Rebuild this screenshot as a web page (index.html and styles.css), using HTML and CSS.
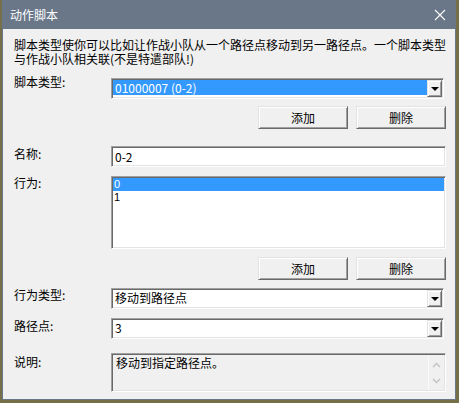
FILE: index.html
```html
<!DOCTYPE html>
<html lang="zh-CN">
<head>
    <meta charset="UTF-8">
    <meta name="viewport" content="width=device-width, initial-scale=1.0">
    <link rel="stylesheet" href="styles.css">
</head>
<body>
    <div class="window">
        <div class="titlebar">
            <span class="title">动作脚本</span>
            <svg class="close" width="12" height="12" viewBox="0 0 12 12">
                <path d="M1 1L11 11M11 1L1 11" stroke="#fff" stroke-width="1.1" fill="none"/>
            </svg>
        </div>

        <div class="content">
            <p class="desc">脚本类型使你可以比如让作战小队从一个路径点移动到另一路径点。一个脚本类型<br>与作战小队相关联(不是特遣部队!)</p>

            <div class="row row-script">
                <span class="label label-up">脚本类型:</span>
                <div class="combo">
                    <span class="combo-value selected">01000007 (0-2)</span>
                    <span class="drop-btn"><i class="arrow"></i></span>
                </div>
            </div>

            <div class="buttons buttons-script">
                <button class="btn">添加</button>
                <button class="btn">删除</button>
            </div>

            <div class="row row-name">
                <span class="label">名称:</span>
                <div class="field">0-2</div>
            </div>

            <div class="row row-actions">
                <span class="label label-mid">行为:</span>
                <div class="listbox">
                    <div class="list-item selected">0</div>
                    <div class="list-item">1</div>
                </div>
            </div>

            <div class="buttons buttons-actions">
                <button class="btn">添加</button>
                <button class="btn">删除</button>
            </div>

            <div class="row row-type">
                <span class="label label-mid">行为类型:</span>
                <div class="combo">
                    <span class="combo-value">移动到路径点</span>
                    <span class="drop-btn"><i class="arrow"></i></span>
                </div>
            </div>

            <div class="row row-waypoint">
                <span class="label">路径点:</span>
                <div class="combo">
                    <span class="combo-value">3</span>
                    <span class="drop-btn"><i class="arrow"></i></span>
                </div>
            </div>

            <div class="row row-note">
                <span class="label label-down">说明:</span>
                <div class="memo">
                    <div class="memo-text">移动到指定路径点。</div>
                    <div class="scrollbar">
                        <svg width="9" height="6" viewBox="0 0 9 6"><path d="M1 5L4.5 1.5L8 5" stroke="#c2c2c2" stroke-width="1.4" fill="none"/></svg>
                        <svg width="9" height="6" viewBox="0 0 9 6"><path d="M1 1L4.5 4.5L8 1" stroke="#c2c2c2" stroke-width="1.4" fill="none"/></svg>
                    </div>
                </div>
            </div>
        </div>
    </div>
</body>
</html>
```

FILE: styles.css
```css
/* Base */
:root {
    --frame: #6a7789;
    --face: #f0f0f0;
    --light: #e3e3e3;
    --shadow: #a0a0a0;
    --dark-shadow: #696969;
    --highlight: #3399ff;
}

* {
    box-sizing: border-box;
}

body {
    margin: 0;
    height: 403px;
    overflow: hidden;
    background-color: #75704a;
    font-family: "Noto Sans CJK SC", sans-serif;
    font-size: 12px;
    line-height: 14px;
    color: #000;
}

/* Window frame */
.window {
    width: 454px;
    height: 400px;
    margin-left: 2px;
    background-color: var(--face);
    border: 1px solid var(--frame);
    border-top: none;
    display: flex;
    flex-direction: column;
}

.titlebar {
    height: 29px;
    margin: 0 -1px;
    padding: 0 10px 0 8px;
    background-color: var(--frame);
    display: flex;
    align-items: center;
    justify-content: space-between;
}

.title {
    color: #fff;
    line-height: 14px;
}

.close {
    display: block;
}

.content {
    padding: 0 9px 0 11px;
}

.desc {
    margin: 9px 0 0;
    white-space: nowrap;
}

/* Form rows */
.row {
    display: grid;
    grid-template-columns: 97px 335px;
    align-items: start;
}

.label {
    margin-top: 1px;
}

.label-up { margin-top: -3px; }
.label-mid { margin-top: 0; }
.label-down { margin-top: 2px; }

.row-script { margin-top: 12px; }
.row-name { margin-top: 17px; }
.row-actions { margin-top: 9px; }
.row-type { margin-top: 8px; }
.row-waypoint { margin-top: 9px; }
.row-note { margin-top: 14px; }

/* Sunken 3D edge */
.combo,
.field,
.listbox,
.memo {
    border: 1px solid;
    border-color: var(--shadow) #fff #fff var(--shadow);
    box-shadow: inset 1px 1px var(--dark-shadow), inset -1px -1px var(--light);
    padding: 1px;
}

.combo {
    width: 333px;
    height: 21px;
    background-color: #fff;
    display: flex;
}

.combo-value {
    flex: 1;
    height: 15px;
    padding-left: 2px;
    line-height: 15px;
    white-space: nowrap;
}

.selected {
    background-color: var(--highlight);
    color: #fff;
}

.drop-btn {
    width: 15px;
    height: 17px;
    background-color: var(--face);
    border: 1px solid;
    border-color: var(--light) var(--dark-shadow) var(--dark-shadow) var(--light);
    box-shadow: inset 1px 1px #fff, inset -1px -1px var(--shadow);
    display: flex;
    align-items: center;
    justify-content: center;
}

.arrow {
    width: 0;
    height: 0;
    border-left: 4px solid transparent;
    border-right: 4px solid transparent;
    border-top: 4px solid #000;
    margin-top: 1px;
}

.field {
    height: 21px;
    background-color: #fff;
    padding-left: 3px;
    line-height: 18px;
}

.listbox {
    height: 73px;
    background-color: #fff;
}

.list-item {
    height: 13px;
    line-height: 13px;
    padding-left: 1px;
    font-family: "Liberation Sans", sans-serif;
    font-size: 11px;
}

.memo {
    height: 39px;
    background-color: var(--face);
    display: flex;
}

.memo-text {
    flex: 1;
    padding: 1px 0 0 3px;
}

.scrollbar {
    width: 16px;
    border-left: 1px solid #fafafa;
    display: flex;
    flex-direction: column;
    align-items: center;
    justify-content: space-around;
    padding: 2px 0 1px;
}

.scrollbar svg {
    display: block;
}

/* Buttons */
.buttons {
    display: flex;
    justify-content: flex-end;
    gap: 8px;
}

.buttons-script { margin-top: 7px; }
.buttons-actions { margin-top: 8px; }

.btn {
    width: 90px;
    height: 23px;
    padding: 0;
    font-family: inherit;
    font-size: 12px;
    color: #000;
    background-color: var(--face);
    border: 1px solid;
    border-color: var(--light) var(--dark-shadow) var(--dark-shadow) var(--light);
    box-shadow: inset 1px 1px #fff, inset -1px -1px var(--shadow);
}
```
